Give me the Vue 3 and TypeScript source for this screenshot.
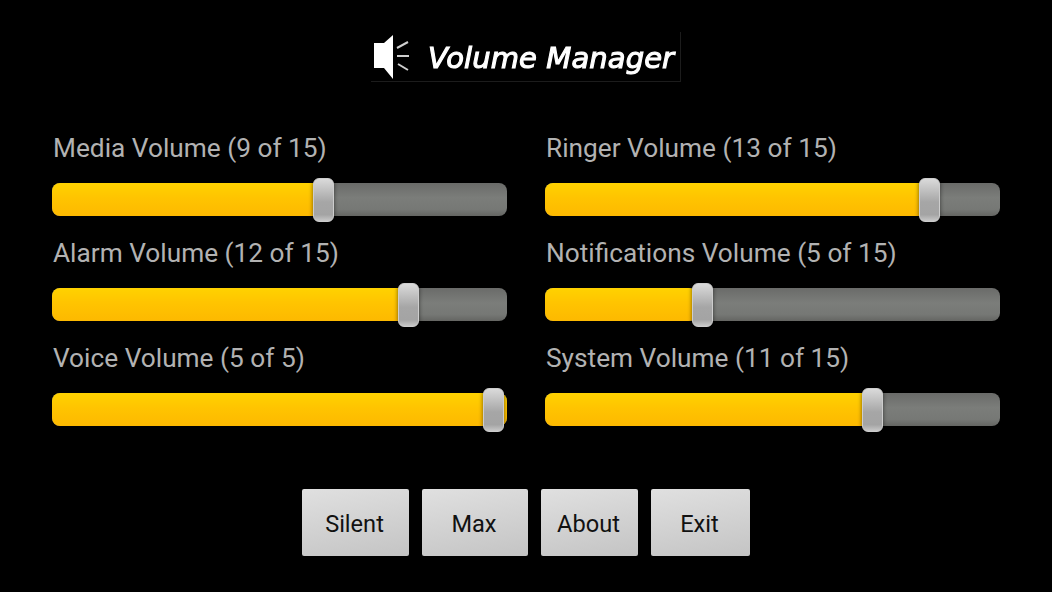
<script setup lang="ts">
interface Channel { name: string; value: number; max: number }
const channels: Channel[] = [
  { name: 'Media', value: 9, max: 15 },
  { name: 'Ringer', value: 13, max: 15 },
  { name: 'Alarm', value: 12, max: 15 },
  { name: 'Notifications', value: 5, max: 15 },
  { name: 'Voice', value: 5, max: 5 },
  { name: 'System', value: 11, max: 15 },
]
const buttons = [
  { label: 'Silent', width: 107 },
  { label: 'Max', width: 106 },
  { label: 'About', width: 97 },
  { label: 'Exit', width: 99 },
]
const fillWidth = (c: Channel) => `${(c.value / c.max) * 100}%`
const thumbLeft = (c: Channel) => `${4.75 + (c.value / c.max) * 426.25}px`
</script>

<template>
  <main class="screen">
    <header class="logo">
      <svg class="speaker" width="44" height="50" viewBox="0 0 44 50" aria-hidden="true">
        <path d="M3 11H13L22 3V47L13 36H3Z" fill="#fff" />
        <path d="M26 16L37 10M26 24H38M27 32L37 38" stroke="#cfcfcf" stroke-width="2" fill="none" />
      </svg>
      <span class="logo-text">Volume Manager</span>
    </header>

    <section class="grid">
      <div v-for="c in channels" :key="c.name" class="channel">
        <div class="label">{{ c.name }} Volume ({{ c.value }} of {{ c.max }})</div>
        <div class="track">
          <div class="fill" :style="{ width: fillWidth(c) }"></div>
          <div class="thumb" :style="{ left: thumbLeft(c) }"></div>
        </div>
      </div>
    </section>

    <nav class="actions">
      <button v-for="b in buttons" :key="b.label" class="btn" :style="{ width: b.width + 'px' }">{{ b.label }}</button>
    </nav>
  </main>
</template>

<style>
html, body { margin: 0; background: #000; }
</style>

<style scoped>
.screen {
  width: 1052px;
  height: 592px;
  background: #000;
  display: flex;
  flex-direction: column;
  align-items: center;
  padding-top: 32px;
  box-sizing: border-box;
  overflow: hidden;
  font-family: Roboto, "Liberation Sans", sans-serif;
}
.logo {
  width: 310px;
  height: 50px;
  box-sizing: border-box;
  border-right: 1px solid #1c1c1c;
  border-bottom: 1px solid #1c1c1c;
  display: flex;
  align-items: center;
  flex-shrink: 0;
}
.speaker { flex-shrink: 0; filter: blur(0.4px); }
.logo-text {
  margin-left: 13px;
  font-family: "DejaVu Sans", sans-serif;
  font-style: italic;
  font-weight: 400;
  font-size: 29px;
  letter-spacing: 0.1px;
  -webkit-text-stroke: 1.1px #fff;
  color: #fff;
  white-space: nowrap;
  transform: translateY(1px);
  filter: blur(0.4px);
}
.grid {
  width: 948px;
  margin-top: 49px;
  display: grid;
  grid-template-columns: 455px 455px;
  column-gap: 38px;
  row-gap: 14px;
}
.channel { height: 91px; }
.label {
  height: 34px;
  line-height: 34px;
  padding-left: 1px;
  font-size: 26.25px;
  color: #b2b2b2;
  white-space: nowrap;
}
.track {
  position: relative;
  margin-top: 18px;
  height: 33px;
  border-radius: 8px;
  background: linear-gradient(#6a6b69, #7b7d7a 45%, #767875 80%, #646562);
}
.fill {
  height: 100%;
  border-radius: 8px;
  background: linear-gradient(#ffd200, #ffc400 45%, #fdb900);
}
.thumb {
  position: absolute;
  top: -5px;
  width: 21px;
  height: 44px;
  box-sizing: border-box;
  border-radius: 6px;
  border: 1px solid #cdcdcd;
  background: linear-gradient(#dadada, #a6a6a6 55%, #a4a4a4 85%, #c8c8c8);
  box-shadow: 0 0 4px rgba(0, 0, 0, 0.55);
}
.actions {
  display: flex;
  gap: 13px;
  margin-top: 57px;
}
.btn {
  height: 67px;
  padding: 2px 2px 0 0;
  border: none;
  border-radius: 2px;
  background: linear-gradient(170deg, #e0e0e0, #c4c4c4);
  font-family: Roboto, "Liberation Sans", sans-serif;
  font-size: 23.6px;
  color: #111;
}
</style>
